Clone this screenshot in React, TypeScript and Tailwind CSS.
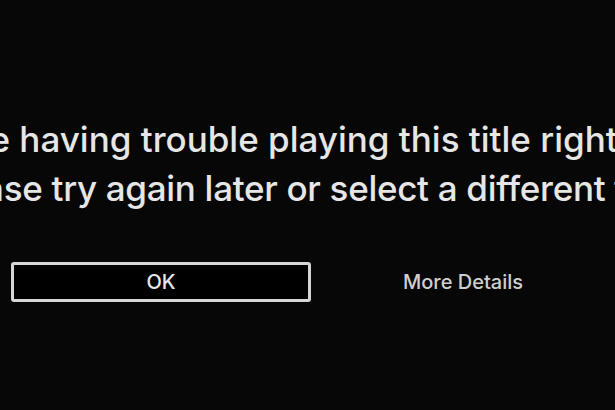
const font = { fontFamily: 'Inter, "Noto Sans", sans-serif' }

export default function App() {
  return (
    <div
      className="w-[615px] h-[410px] overflow-hidden bg-[#070707] flex flex-col items-center"
      style={font}
    >
      <div className="mt-[115px] ml-[3px] flex flex-col items-center text-[35px] leading-[49px] font-medium text-[#e6e6e6] whitespace-nowrap">
        <p>We're having trouble playing this title right now.</p>
        <p className="tracking-[-0.3px]">Please try again later or select a different title.</p>
      </div>

      <div className="mt-[49px] w-full flex items-center pl-[11px] gap-[2px]">
        <button className="w-[300px] h-[40px] border-[3px] border-[#d6d6d6] rounded-[3px] bg-black text-[20px] font-medium text-[#e8e8e8]">
          OK
        </button>
        <div className="w-[300px] flex justify-center text-[20px] font-medium text-[#cfcfcf]">
          More Details
        </div>
      </div>
    </div>
  )
}
